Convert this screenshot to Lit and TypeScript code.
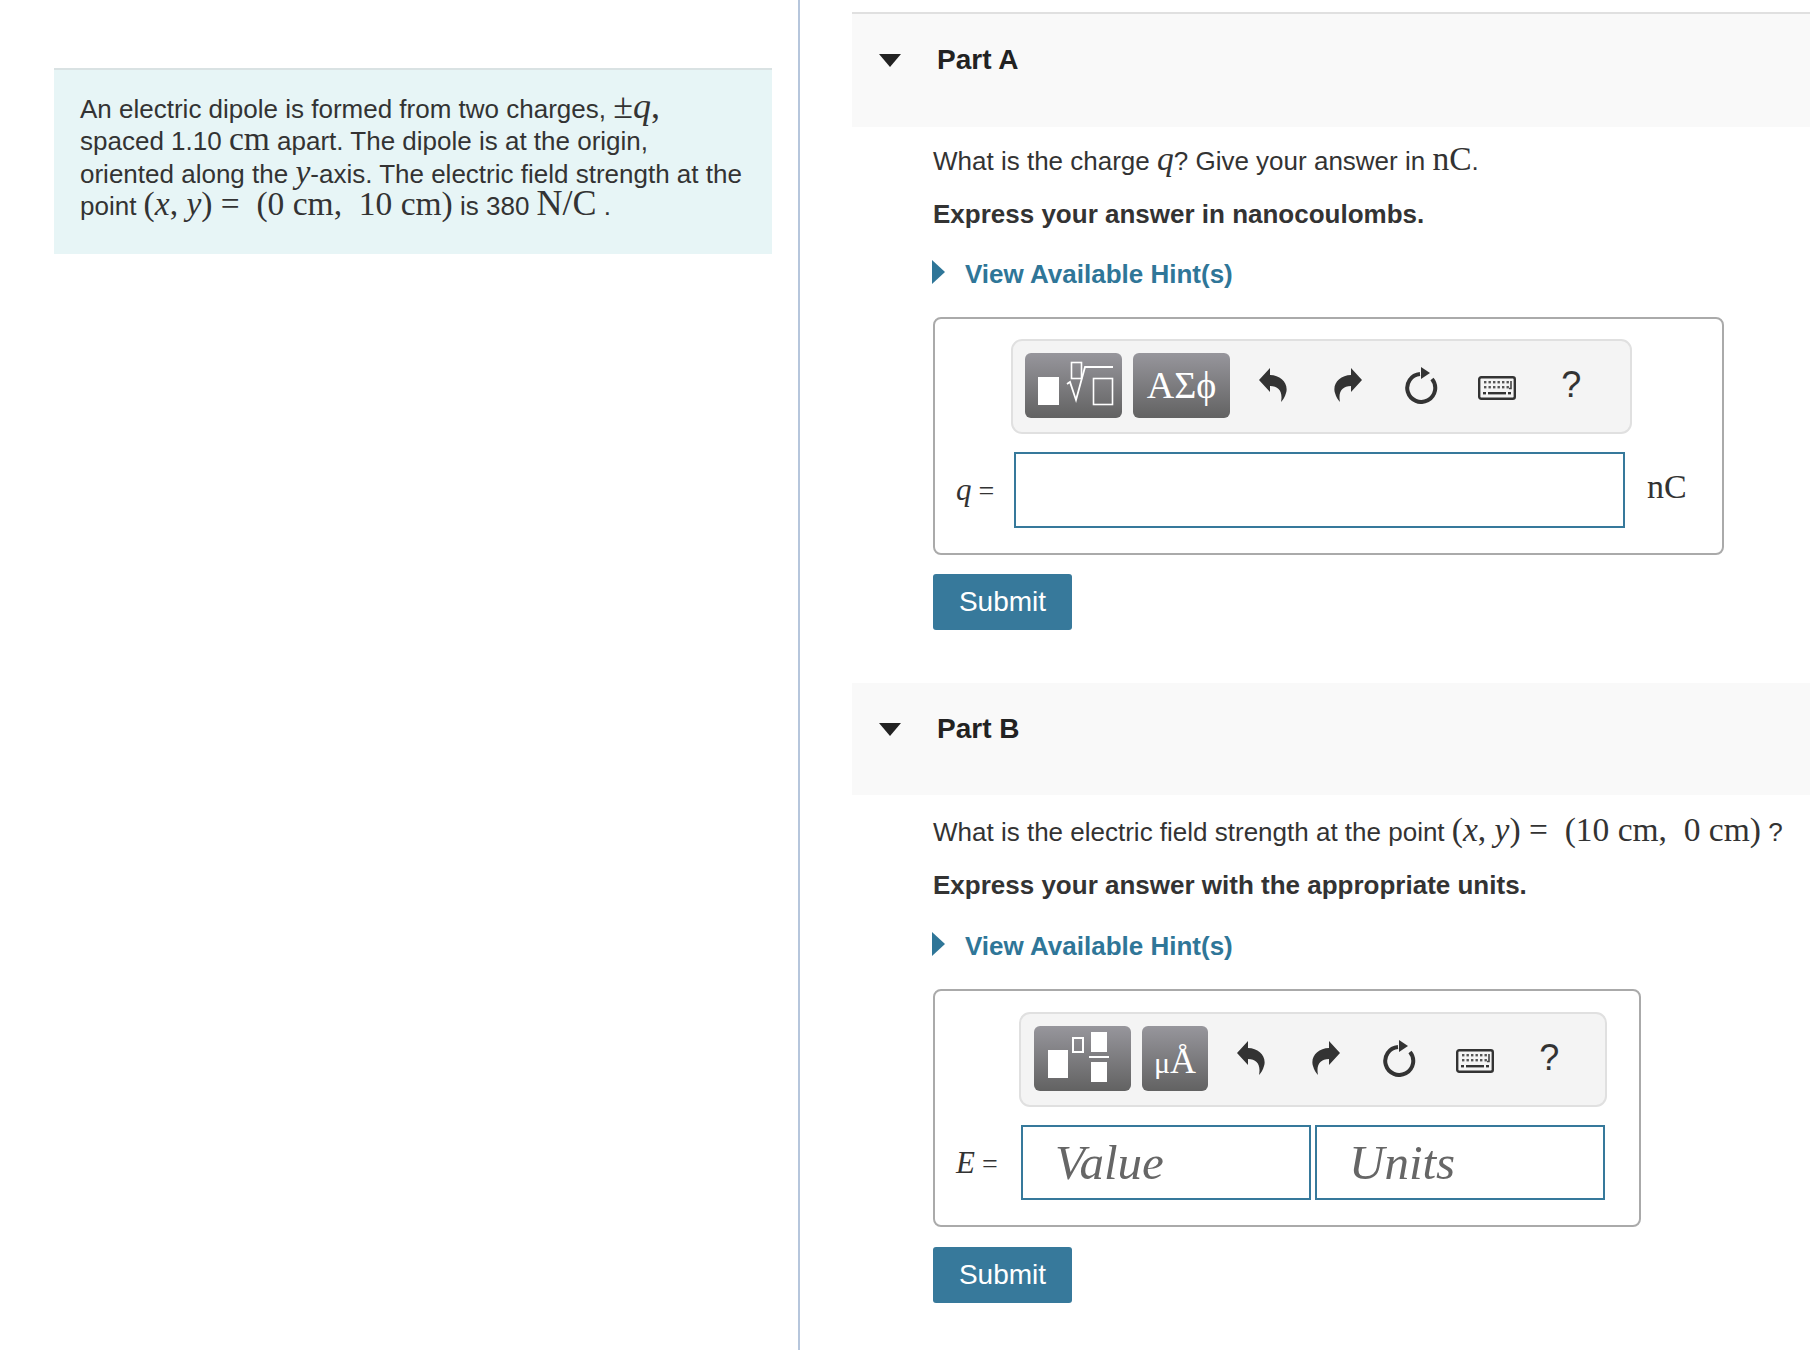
import { LitElement, css, html, svg } from 'lit';
import { customElement } from 'lit/decorators.js';

const undoPath = 'M0 12 L11 0 V7 C22 7 30 16 27 25 C26 29 24 32 22 34 C24 24 20 18 11 18 V24 Z';

const sideIcons = html`
  <span class="slot">
    <svg width="28" height="34" viewBox="0 0 28 34"><path d=${undoPath} fill="#333" /></svg>
  </span>
  <span class="slot">
    <svg width="28" height="34" viewBox="0 0 28 34"><g transform="translate(28 0) scale(-1 1)"><path d=${undoPath} fill="#333" /></g></svg>
  </span>
  <span class="slot">
    <svg width="34" height="38" viewBox="0 0 34 38">
      <path d="M27 13 A14 14 0 1 1 15 8" fill="none" stroke="#333" stroke-width="4" />
      <path d="M16 1 L25 7 L16 13 Z" fill="#333" />
    </svg>
  </span>
  <span class="slot kb">
    <svg width="38" height="24" viewBox="0 0 38 24">
      <rect x="1.2" y="1.2" width="35.6" height="21.6" rx="2" fill="#f4f4f4" stroke="#333" stroke-width="2.4" />
      ${[6, 10.5, 15, 19.5, 24, 28.5].map(
        (x) => svg`<rect x=${x} y="5" width="2.4" height="2.4" fill="#555" /><rect x=${x} y="10" width="2.4" height="2.4" fill="#555" />`
      )}
      <path d="M33 5 V12.5 H31" fill="none" stroke="#444" stroke-width="1.6" />
      <rect x="5" y="16" width="3" height="2.4" fill="#333" />
      <rect x="10" y="16" width="18" height="2.4" fill="#333" />
      <rect x="30" y="16" width="3" height="2.4" fill="#333" />
    </svg>
  </span>
  <span class="slot help">?</span>
`;

@customElement('math-toolbar')
export class MathToolbar extends LitElement {
  static properties = { variant: { type: String } };
  declare variant: string;

  static styles = css`
    :host {
      display: block;
    }
    .bar {
      display: flex;
      align-items: center;
      box-sizing: border-box;
      height: 95px;
      padding: 0 0 3px 12px;
      background: #f4f4f4;
      border: 2px solid #e0e0e0;
      border-radius: 11px;
    }
    .units-bar {
      padding-left: 13px;
    }
    .btn {
      display: flex;
      align-items: center;
      justify-content: center;
      box-sizing: border-box;
      height: 65px;
      border-radius: 6px;
      background: linear-gradient(#97969c, #626262);
      color: #fff;
      font-family: 'Liberation Serif', serif;
      font-size: 38px;
    }
    .btn svg {
      display: block;
    }
    .wide {
      width: 97px;
    }
    .greek {
      width: 97px;
      margin: 0 6px 0 11px;
    }
    .units {
      width: 66px;
      margin: 0 6px 0 11px;
      padding-top: 6px;
      align-items: baseline;
      line-height: 58px;
    }
    .mu {
      font-size: 30px;
    }
    .ang {
      font-size: 36px;
    }
    .slot {
      display: flex;
      align-items: center;
      justify-content: center;
      width: 74.5px;
    }
    .kb {
      padding-top: 5px;
    }
    .help {
      font-family: 'Liberation Sans', sans-serif;
      font-size: 36px;
      line-height: 40px;
      color: #333;
    }
  `;

  render() {
    const isUnits = this.variant === 'units';
    return html`
      <div class="bar ${isUnits ? 'units-bar' : ''}">
        <span class="btn wide">
          ${isUnits
            ? html`<svg width="97" height="65" viewBox="0 0 97 65">
                <rect x="14" y="24" width="20" height="28" fill="#fff" />
                <rect x="39" y="12" width="10" height="14" fill="none" stroke="#fff" stroke-width="2" />
                <rect x="57" y="6" width="16" height="20" fill="#fff" />
                <rect x="55" y="30" width="20" height="2" fill="#fff" />
                <rect x="57" y="36" width="16" height="20" fill="#fff" />
              </svg>`
            : html`<svg width="97" height="65" viewBox="0 0 97 65">
                <rect x="13" y="24" width="21" height="28" fill="#fff" />
                <rect x="46.5" y="9.5" width="10" height="16" fill="none" stroke="#fff" stroke-width="1.6" />
                <path d="M42 31 L45 29 L51 47 L60 14 H88" fill="none" stroke="#fff" stroke-width="1.8" />
                <rect x="68.5" y="25.5" width="19" height="26" fill="none" stroke="#fff" stroke-width="1.6" />
              </svg>`}
        </span>
        ${isUnits
          ? html`<span class="btn units"><span class="mu">μ</span><span class="ang">Å</span></span>`
          : html`<span class="btn greek">ΑΣϕ</span>`}
        ${sideIcons}
      </div>
    `;
  }
}

@customElement('app-root')
export class AppRoot extends LitElement {
  static styles = css`
    :host {
      display: grid;
      grid-template-columns: 800px 1fr;
      height: 1350px;
      overflow: hidden;
      font-family: 'Liberation Sans', Arial, sans-serif;
      font-size: 26px;
      color: #333;
      background: #fff;
    }
    .left {
      box-sizing: border-box;
      padding: 68px 26px 0 54px;
      border-right: 2px solid #b6c6dc;
    }
    .intro {
      box-sizing: border-box;
      height: 186px;
      padding: 23px 26px 0;
      background: #e7f5f6;
      border-top: 2px solid #d9e2e3;
      line-height: 32.3px;
      white-space: nowrap;
    }
    .m {
      font-family: 'Liberation Serif', serif;
      font-size: 33.5px;
      line-height: 0;
    }
    .lg {
      font-size: 36px;
    }
    .right {
      padding: 12px 0 0 52px;
      min-width: 0;
    }
    .part-head {
      display: flex;
      align-items: flex-start;
      box-sizing: border-box;
      background: #f9f9f9;
      padding: 30px 0 0 27px;
      font-size: 28px;
      font-weight: 700;
      color: #222;
    }
    .part-a {
      height: 115px;
      border-top: 2px solid #e0e0e0;
    }
    .part-b {
      height: 112px;
      margin-top: 53px;
    }
    .caret {
      width: 0;
      height: 0;
      margin: 10px 36px 0 0;
      border-left: 11px solid transparent;
      border-right: 11px solid transparent;
      border-top: 13px solid #222;
    }
    .part-body {
      padding-left: 81px;
    }
    .question {
      margin: 15px 0 0;
      line-height: 38px;
      white-space: nowrap;
    }
    .part-b + .part-body .question {
      margin-top: 18px;
    }
    .express {
      margin: 15px 0 0;
      line-height: 38px;
      font-weight: 700;
    }
    .hint {
      display: flex;
      align-items: center;
      margin-top: 22px;
      height: 38px;
      font-weight: 700;
      color: #2f7698;
    }
    .part-b + .part-body .hint {
      margin-top: 23px;
    }
    .hint-arrow {
      width: 0;
      height: 0;
      margin: -4px 20px 0 -1px;
      border-top: 12px solid transparent;
      border-bottom: 12px solid transparent;
      border-left: 13px solid #2f7698;
    }
    .answer {
      box-sizing: border-box;
      margin-top: 24px;
      border: 2px solid #aaa;
      border-radius: 8px;
      height: 238px;
      padding-top: 20px;
    }
    .answer-a {
      width: 791px;
    }
    .answer-b {
      width: 708px;
      padding-top: 21px;
    }
    .answer-a math-toolbar {
      margin-left: 76px;
      width: 621px;
    }
    .answer-b math-toolbar {
      margin-left: 84px;
      width: 588px;
    }
    .row {
      display: flex;
      align-items: center;
      margin-top: 18px;
    }
    .label {
      flex: none;
      box-sizing: border-box;
      padding-left: 21px;
      font-family: 'Liberation Serif', serif;
      font-size: 28px;
      color: #333;
    }
    .label i {
      font-size: 31px;
    }
    .answer-a .label {
      width: 79px;
    }
    .answer-b .label {
      width: 86px;
    }
    input {
      box-sizing: border-box;
      height: 75px;
      border: 2px solid #36799b;
      border-radius: 0;
      background: #fff;
      outline: none;
      font-family: 'Liberation Serif', serif;
      font-style: italic;
      font-size: 49px;
      padding: 0 0 0 32px;
    }
    input::placeholder {
      color: #666;
      opacity: 1;
    }
    .full {
      width: 611px;
      height: 76px;
    }
    .half {
      width: 290px;
    }
    .half + .half {
      margin-left: 4px;
    }
    .unit {
      margin: -6px 0 0 22px;
      font-family: 'Liberation Serif', serif;
      font-size: 34px;
    }
    button {
      display: block;
      box-sizing: border-box;
      width: 139px;
      height: 56px;
      margin-top: 19px;
      padding: 0;
      border: none;
      border-radius: 3px;
      background: #37799b;
      color: #fff;
      font: 28px 'Liberation Sans', Arial, sans-serif;
    }
    .answer-b + button {
      margin-top: 20px;
    }
  `;

  render() {
    return html`
      <section class="left">
        <div class="intro">
          An electric dipole is formed from two charges, <span class="m lg">±<i>q</i>,</span><br />
          spaced 1.10 <span class="m">cm</span> apart. The dipole is at the origin,<br />
          oriented along the <span class="m"><i>y</i></span>-axis. The electric field strength at the<br />
          point <span class="m">(<i>x</i>, <i>y</i>) = &nbsp;(0 cm, &nbsp;10 cm)</span> is 380 <span class="m lg">N/C</span> .
        </div>
      </section>
      <section class="right">
        <div class="part-head part-a"><span class="caret"></span>Part A</div>
        <div class="part-body">
          <p class="question">
            What is the charge <span class="m"><i>q</i></span>? Give your answer in <span class="m">nC</span>.
          </p>
          <p class="express">Express your answer in nanocoulombs.</p>
          <div class="hint"><span class="hint-arrow"></span>View Available Hint(s)</div>
          <div class="answer answer-a">
            <math-toolbar variant="math"></math-toolbar>
            <div class="row">
              <span class="label"><i>q</i> =</span>
              <input class="full" type="text" />
              <span class="unit">nC</span>
            </div>
          </div>
          <button>Submit</button>
        </div>
        <div class="part-head part-b"><span class="caret"></span>Part B</div>
        <div class="part-body">
          <p class="question">
            What is the electric field strength at the point
            <span class="m">(<i>x</i>, <i>y</i>) = &nbsp;(10 cm, &nbsp;0 cm)</span> ?
          </p>
          <p class="express">Express your answer with the appropriate units.</p>
          <div class="hint"><span class="hint-arrow"></span>View Available Hint(s)</div>
          <div class="answer answer-b">
            <math-toolbar variant="units"></math-toolbar>
            <div class="row">
              <span class="label"><i>E</i> =</span>
              <input class="half" type="text" placeholder="Value" />
              <input class="half" type="text" placeholder="Units" />
            </div>
          </div>
          <button>Submit</button>
        </div>
      </section>
    `;
  }
}
